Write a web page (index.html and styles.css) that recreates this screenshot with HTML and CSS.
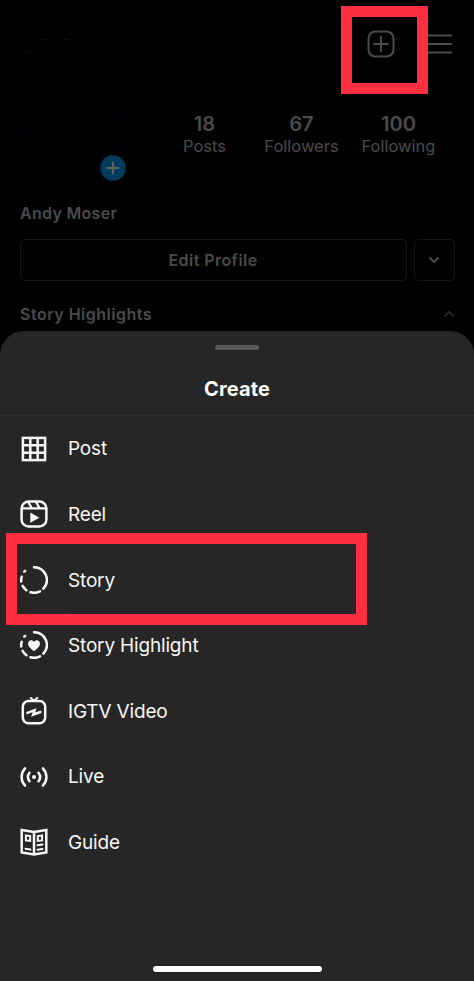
FILE: index.html
```html
<!DOCTYPE html>
<html lang="en">
<head>
<meta charset="utf-8">
<title>Create</title>
<link rel="stylesheet" href="styles.css">
</head>
<body>
<main class="screen">
  <section class="profile">
    <header class="topbar">
      <svg class="username-trace" width="90" height="16" viewBox="0 0 90 16"><path d="M18 3.500h5M30 3.500h4M39 3.500h6M73 8h2M2 15.500h8" stroke="#0d0d0d" fill="none"/></svg>
      <div class="actions">
        <svg class="add" width="28" height="28" viewBox="0 0 28 28" fill="none" stroke="#4d4d4d" stroke-width="2" stroke-linecap="round"><rect x="1.500" y="1.500" width="25" height="25" rx="7"/><path d="M14 7v14M7 14h14"/></svg>
        <svg class="menu" width="27" height="20" viewBox="0 0 27 20" stroke="#4d4d4d" stroke-width="2"><path d="M0 1.500h26M0 10h26M0 18.500h26"/></svg>
        <span class="mark mark-add"></span>
      </div>
    </header>
    <div class="summary">
      <div class="avatar">
        <svg class="badge" width="26" height="26" viewBox="0 0 26 26"><circle cx="13" cy="13" r="12.800" fill="#003c5e"/><path d="M13 7.500v11M7.500 13h11" stroke="#626262" stroke-width="2.200" stroke-linecap="round"/></svg>
      </div>
      <div class="stat posts"><b>18</b><span>Posts</span></div>
      <div class="stat"><b>67</b><span>Followers</span></div>
      <div class="stat"><b>100</b><span>Following</span></div>
    </div>
    <div class="name">Andy Moser</div>
    <div class="buttons">
      <div class="button edit">Edit Profile</div>
      <div class="button more"><svg width="12" height="8" viewBox="0 0 12 8" fill="none" stroke="#4d4d4d" stroke-width="1.900"><path d="M1.500 1.500L6 6l4.500-4.500"/></svg></div>
    </div>
    <div class="highlights">Story Highlights<svg width="12" height="8" viewBox="0 0 12 8" fill="none" stroke="#303030" stroke-width="1.700"><path d="M1.500 6.500L6 2l4.500 4.500"/></svg></div>
  </section>

  <section class="sheet">
    <div class="grabber"></div>
    <h1>Create</h1>
    <ul>
      <li>
        <svg viewBox="0 0 28 28"><rect x="2.900" y="2.900" width="22.200" height="22.200"/><path d="M10.300 3v22M17.700 3v22M3 10.300h22M3 17.700h22"/></svg>
        <div class="label"><span>Post</span></div>
      </li>
      <li>
        <svg viewBox="0 0 28 28"><rect x="1.600" y="1.600" width="24.800" height="24.800" rx="7"/><path d="M2 8.400h24M8.200 2l3.700 6.400M16 2l3.700 6.400" stroke-width="2.300"/><path class="solid" d="M10.300 12.600v10.200l9-5.100z"/></svg>
        <div class="label"><span>Reel</span></div>
      </li>
      <li class="story">
        <svg viewBox="0 0 28 28"><path d="M14 1.200a12.800 12.800 0 0 1 9.400 21.500M20 25.300a12.800 12.800 0 0 1-9.600 1M6.400 24.300a12.800 12.800 0 0 1-3.800-4.400M1.200 15.500a12.800 12.800 0 0 1 .5-4.700M4.300 5.700l.8-.8"/></svg>
        <div class="label"><span>Story</span></div>
        <span class="mark mark-story"></span>
      </li>
      <li>
        <svg viewBox="0 0 28 28"><path d="M14 1.200a12.800 12.800 0 0 1 9.400 21.500M20 25.300a12.800 12.800 0 0 1-9.600 1M6.400 24.300a12.800 12.800 0 0 1-3.800-4.400M1.200 15.500a12.800 12.800 0 0 1 .5-4.700M4.300 5.700l.8-.8"/><path class="solid" d="M14 20.300C10.500 17.700 8 15.500 8 12.600c0-3.500 4.300-4.600 6-1.600 1.700-3 6-1.900 6 1.600 0 2.900-2.500 5.100-6 7.700z"/></svg>
        <div class="label"><span>Story Highlight</span></div>
      </li>
      <li>
        <svg viewBox="0 0 28 28"><rect x="2.800" y="3.900" width="22.400" height="22.400" rx="5.800"/><path d="M10.800 .9L14 3.700l3.200-2.800" stroke-width="2"/><path d="M7.400 15.900l7.200-2.700-1.400 4.400 7.200-2.600"/></svg>
        <div class="label"><span>IGTV Video</span></div>
      </li>
      <li>
        <svg viewBox="0 0 28 28"><circle class="solid" cx="14" cy="14" r="2"/><path d="M9.500 9.700c-1.900 2.500-1.900 6.100 0 8.600M18.500 9.700c1.900 2.500 1.900 6.100 0 8.600M5.100 5.300c-4.700 5-4.700 12.400 0 17.400M22.900 5.300c4.700 5 4.700 12.400 0 17.400"/></svg>
        <div class="label"><span>Live</span></div>
      </li>
      <li>
        <svg viewBox="0 0 28 28"><path d="M14 4L1.700 2v22.400L14 26.500l12.300-2.100V2zM14 4v22.500"/><path d="M5.900 7.500l4.300.6v4.800l-4.300-.5zM22.100 7.500l-4.300.6v4.800l4.300-.5zM5.500 20.700l5 .9M17.500 17.300l5-.8M17.500 21.700l5-.8" stroke-width="2"/></svg>
        <div class="label"><span>Guide</span></div>
      </li>
    </ul>
    <div class="home"></div>
  </section>
</main>
</body>
</html>
```
FILE: styles.css
```css
* { box-sizing: border-box; }
body { margin: 0; background: #000; font-family: Inter, "Liberation Sans", sans-serif; }
svg { display: block; flex: none; }
.screen { width: 474px; height: 981px; overflow: hidden; display: flex; flex-direction: column; }
.profile { height: 331px; flex: none; color: #4b4b4b; padding: 0 19px 0 20px; }
.topbar { height: 83px; display: flex; justify-content: space-between; padding-top: 30px; }
.username-trace { margin: 6px 0 0 4px; }
.actions { display: flex; gap: 31px; position: relative; height: 28px; align-items: center; padding-right: 2px; }
.mark { position: absolute; border: 11px solid #ff2f42; }
.mark-add { width: 87px; height: 88px; left: -26px; top: -24px; }
.summary { display: flex; height: 112px; }
.avatar { width: 98px; height: 98px; margin-left: 4px; border-radius: 50%; background: #010103; position: relative; }
.badge { position: absolute; left: 76px; top: 72px; }
.stat { width: 97px; padding-top: 30px; display: flex; flex-direction: column; align-items: center; line-height: 21px; font-size: 16.500px; white-space: nowrap; }
.posts { margin-left: 34px; }
.stat b { font-size: 20px; font-weight: 600; line-height: 23px; }
.name { font-size: 16px; font-weight: 600; line-height: 36px; height: 44px; letter-spacing: .3px; }
.buttons { display: flex; gap: 7px; height: 42px; margin-left: -.5px; }
.button { border: 1px solid #151515; border-radius: 5px; display: flex; align-items: center; justify-content: center; font-size: 16px; font-weight: 600; letter-spacing: .45px; }
.edit { width: 387px; }
.more { width: 41px; }
.highlights { display: flex; justify-content: space-between; align-items: center; height: 24px; margin-top: 21px; font-size: 16px; font-weight: 600; letter-spacing: .5px; }
.sheet { height: 650px; flex: none; background: #262626; border-radius: 24px 24px 0 0; color: #f7f7f7; }
.grabber { width: 44px; height: 5px; margin: 0 auto; border-radius: 3px; background: #585858; position: relative; top: 14px; }
h1 { height: 80px; margin: 0; padding-top: 40px; font-size: 20px; font-weight: 700; line-height: 26px; letter-spacing: .1px; text-align: center; border-bottom: 1px solid #2e2e2e; color: #fff; }
ul { list-style: none; margin: 0; padding: 0; }
li { height: 65.550px; display: flex; align-items: center; padding-left: 20px; position: relative; }
li svg { width: 28px; height: 28px; fill: none; stroke: #f7f7f7; stroke-width: 2.500; stroke-linecap: round; }
li .solid { fill: #f7f7f7; stroke: none; }
.label { flex: 1; height: 100%; margin-left: 20px; padding-top: 1.400px; display: flex; align-items: center; border-bottom: 1px solid #2b2b2b; font-size: 19px; letter-spacing: -.17px; }
.mark-story { left: 5.500px; top: -14px; width: 361px; height: 92px; }
.home { width: 169px; height: 6px; margin: 91px auto 0; border-radius: 3px; background: #fff; box-shadow: 0 0 2px #111; }
```
